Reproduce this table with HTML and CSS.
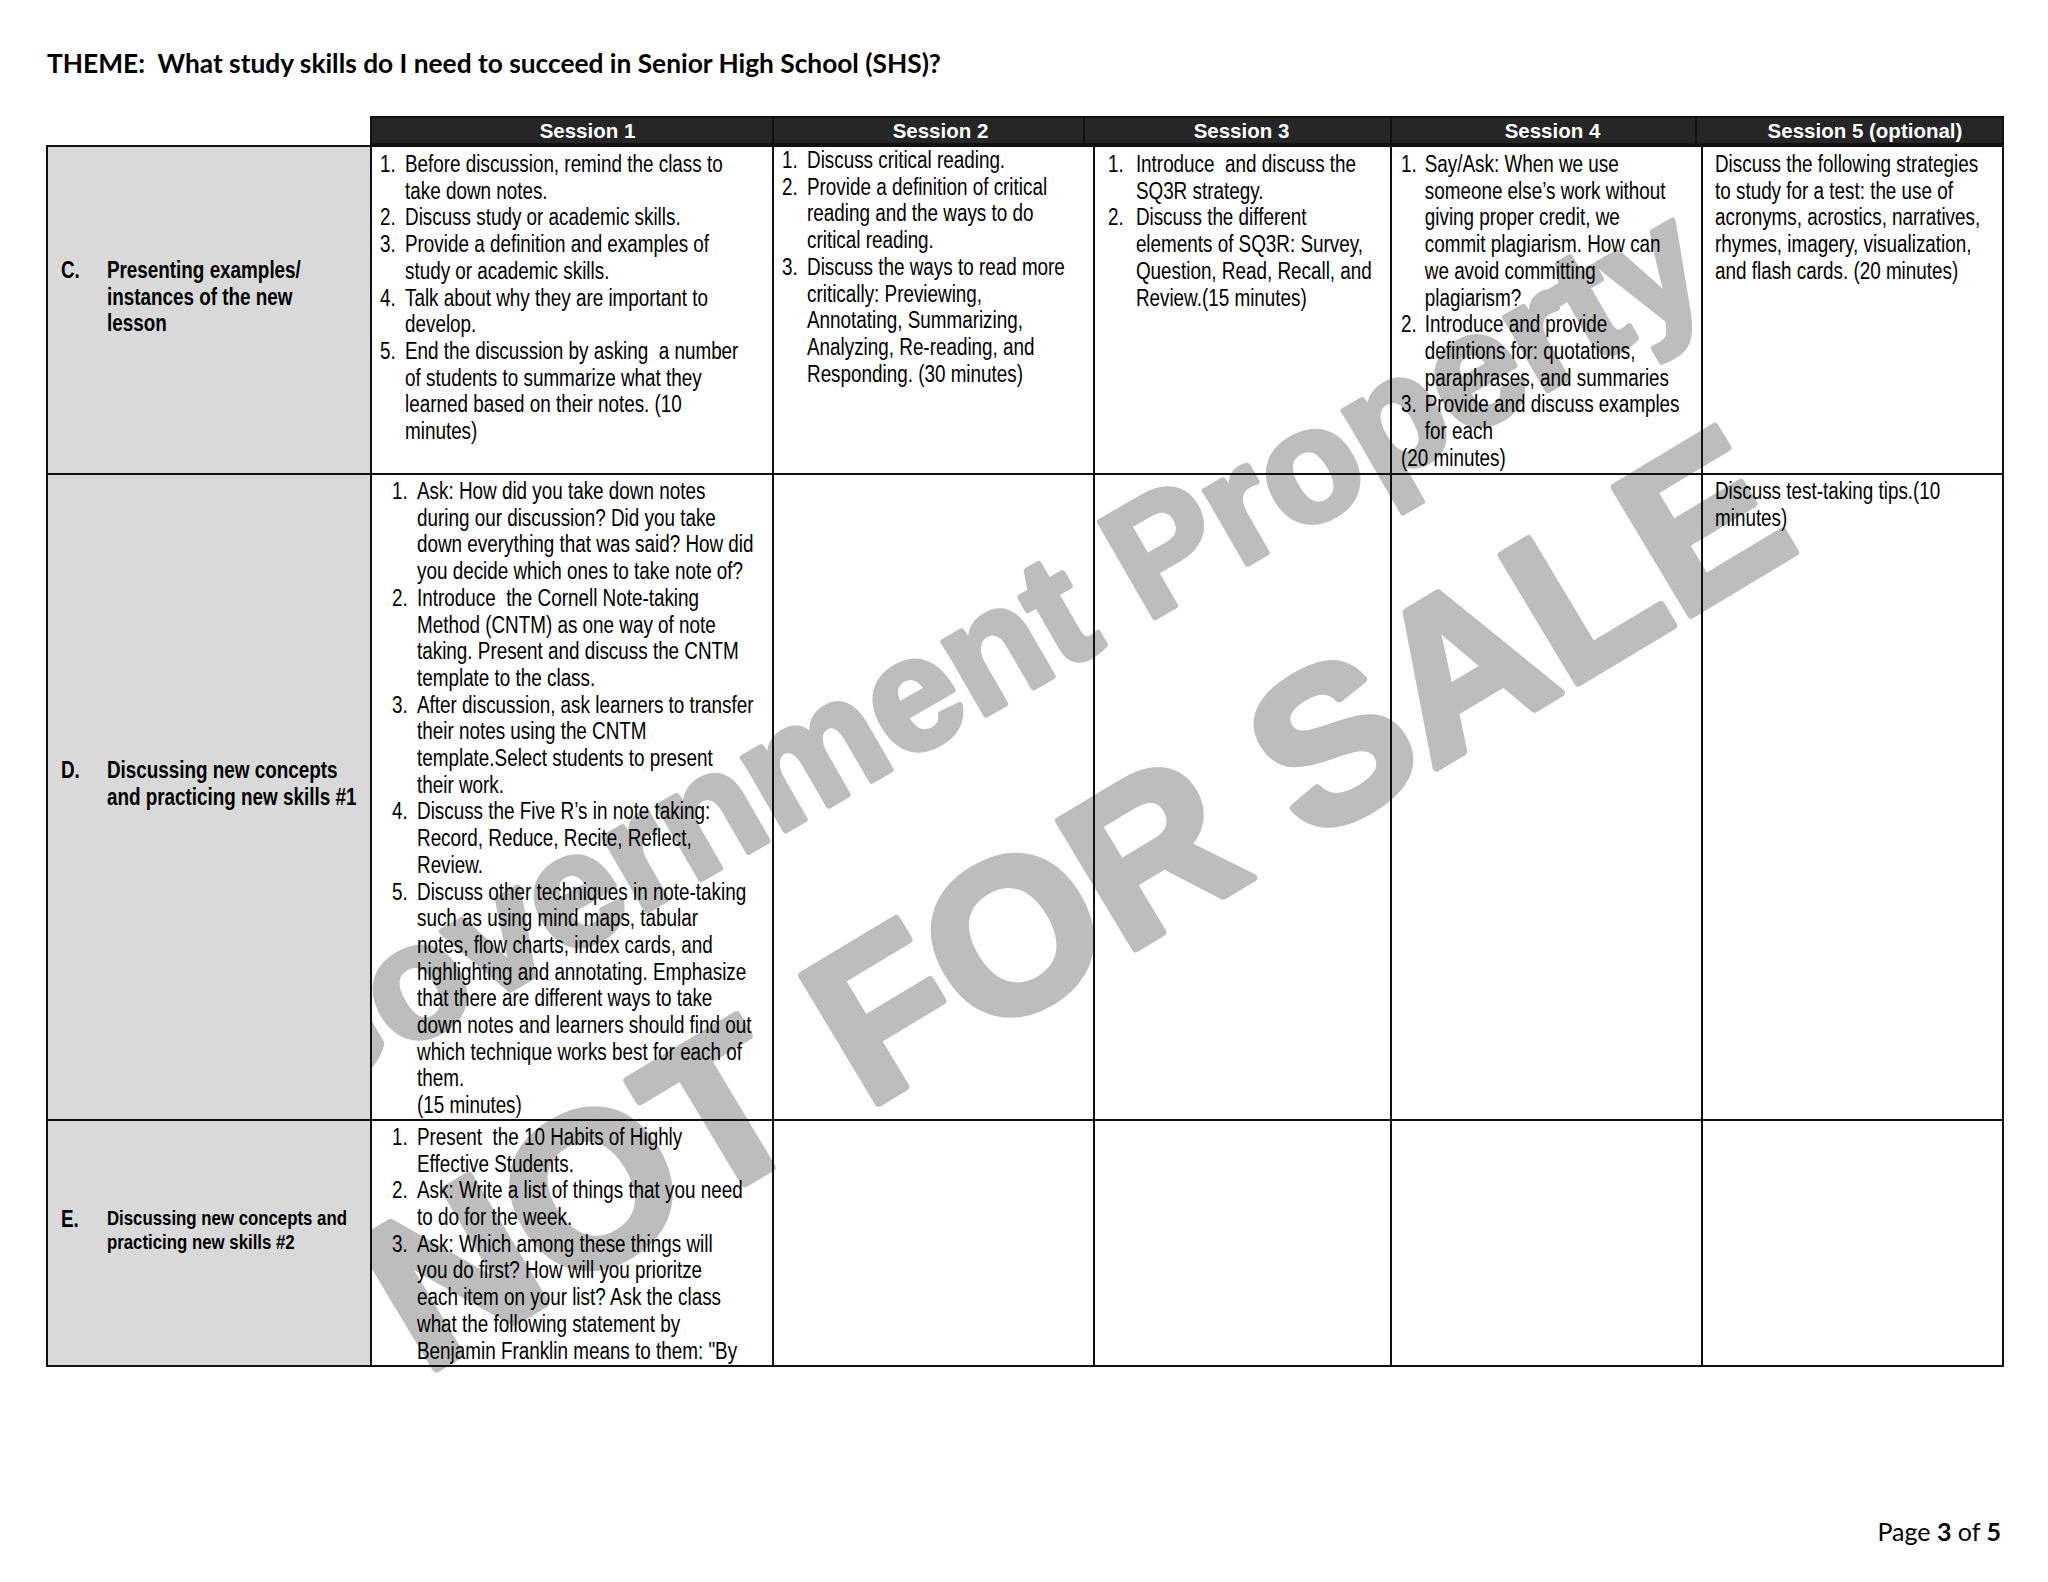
FILE: index.html
```html
<!DOCTYPE html>
<html lang="en">
<head>
<meta charset="utf-8">
<title>THEME: What study skills do I need to succeed in Senior High School (SHS)?</title>
<link rel="stylesheet" href="styles.css">
</head>
<body>
<div class="page">
  <svg class="watermark" width="2048" height="1582" viewBox="0 0 2048 1582" aria-hidden="true">
    <text class="wm wm-gov" x="291" y="1116" transform="rotate(-30 291 1116)">Government Property</text>
    <text class="wm wm-sale" x="424" y="1376" transform="rotate(-31 424 1376)">NOT FOR SALE</text>
  </svg>

  <h1 class="theme">THEME:&nbsp; What study skills do I need to succeed in Senior High School (SHS)?</h1>

  <div class="sheet">
    <table class="head">
      <colgroup>
        <col class="h1"><col class="h2"><col class="h3"><col class="h4"><col class="h5">
      </colgroup>
      <tr>
        <th class="hs1">Session 1</th>
        <th class="hs2">Session 2</th>
        <th class="hs3">Session 3</th>
        <th class="hs4">Session 4</th>
        <th class="hs5">Session 5 (optional)</th>
      </tr>
    </table>

    <table class="plan">
      <colgroup>
        <col class="c0"><col class="c1"><col class="c2"><col class="c3"><col class="c4"><col class="c5">
      </colgroup>
      <tr class="row-c">
        <td class="label">
          <div class="lbl"><span class="key">C.</span><span class="what">Presenting examples/<br>instances of the new<br>lesson</span></div>
        </td>
        <td class="s1">
          <ol class="steps">
            <li><span class="n">1.</span><span class="t">Before discussion, remind the class to<br>take down notes.</span></li>
            <li><span class="n">2.</span><span class="t">Discuss study or academic skills.</span></li>
            <li><span class="n">3.</span><span class="t">Provide a definition and examples of<br>study or academic skills.</span></li>
            <li><span class="n">4.</span><span class="t">Talk about why they are important to<br>develop.</span></li>
            <li><span class="n">5.</span><span class="t">End the discussion by asking&nbsp; a number<br>of students to summarize what they<br>learned based on their notes. (10<br>minutes)</span></li>
          </ol>
        </td>
        <td class="s2">
          <ol class="steps">
            <li><span class="n">1.</span><span class="t">Discuss critical reading.</span></li>
            <li><span class="n">2.</span><span class="t">Provide a definition of critical<br>reading and the ways to do<br>critical reading.</span></li>
            <li><span class="n">3.</span><span class="t">Discuss the ways to read more<br>critically: Previewing,<br>Annotating, Summarizing,<br>Analyzing, Re-reading, and<br>Responding. (30 minutes)</span></li>
          </ol>
        </td>
        <td class="s3">
          <ol class="steps">
            <li><span class="n">1.</span><span class="t">Introduce&nbsp; and discuss the<br>SQ3R strategy.</span></li>
            <li><span class="n">2.</span><span class="t">Discuss the different<br>elements of SQ3R: Survey,<br>Question, Read, Recall, and<br>Review.(15 minutes)</span></li>
          </ol>
        </td>
        <td class="s4">
          <ol class="steps">
            <li><span class="n">1.</span><span class="t">Say/Ask: When we use<br>someone else’s work without<br>giving proper credit, we<br>commit plagiarism. How can<br>we avoid committing<br>plagiarism?</span></li>
            <li><span class="n">2.</span><span class="t">Introduce and provide<br>defintions for: quotations,<br>paraphrases, and summaries</span></li>
            <li><span class="n">3.</span><span class="t">Provide and discuss examples<br>for each</span></li>
          </ol>
          <p class="note">(20 minutes)</p>
        </td>
        <td class="s5">
          <p class="plain">Discuss the following strategies<br>to study for a test: the use of<br>acronyms, acrostics, narratives,<br>rhymes, imagery, visualization,<br>and flash cards. (20 minutes)</p>
        </td>
      </tr>

      <tr class="row-d">
        <td class="label">
          <div class="lbl"><span class="key">D.</span><span class="what">Discussing new concepts<br>and practicing new skills #1</span></div>
        </td>
        <td class="s1 deep">
          <ol class="steps">
            <li><span class="n">1.</span><span class="t">Ask: How did you take down notes<br>during our discussion? Did you take<br>down everything that was said? How did<br>you decide which ones to take note of?</span></li>
            <li><span class="n">2.</span><span class="t">Introduce&nbsp; the Cornell Note-taking<br>Method (CNTM) as one way of note<br>taking. Present and discuss the CNTM<br>template to the class.</span></li>
            <li><span class="n">3.</span><span class="t">After discussion, ask learners to transfer<br>their notes using the CNTM<br>template.Select students to present<br>their work.</span></li>
            <li><span class="n">4.</span><span class="t">Discuss the Five R’s in note taking:<br>Record, Reduce, Recite, Reflect,<br>Review.</span></li>
            <li><span class="n">5.</span><span class="t">Discuss other techniques in note-taking<br>such as using mind maps, tabular<br>notes, flow charts, index cards, and<br>highlighting and annotating. Emphasize<br>that there are different ways to take<br>down notes and learners should find out<br>which technique works best for each of<br>them.<br>(15 minutes)</span></li>
          </ol>
        </td>
        <td class="s2"></td>
        <td class="s3"></td>
        <td class="s4"></td>
        <td class="s5">
          <p class="plain">Discuss test-taking tips.(10<br>minutes)</p>
        </td>
      </tr>

      <tr class="row-e">
        <td class="label">
          <div class="lbl"><span class="key">E.</span><span class="what small">Discussing new concepts and<br>practicing new skills #2</span></div>
        </td>
        <td class="s1 deep">
          <div class="clip">
            <ol class="steps">
              <li><span class="n">1.</span><span class="t">Present&nbsp; the 10 Habits of Highly<br>Effective Students.</span></li>
              <li><span class="n">2.</span><span class="t">Ask: Write a list of things that you need<br>to do for the week.</span></li>
              <li><span class="n">3.</span><span class="t">Ask: Which among these things will<br>you do first? How will you prioritze<br>each item on your list? Ask the class<br>what the following statement by<br>Benjamin Franklin means to them: "By</span></li>
            </ol>
          </div>
        </td>
        <td class="s2"></td>
        <td class="s3"></td>
        <td class="s4"></td>
        <td class="s5"></td>
      </tr>
    </table>
  </div>

  <footer class="page-num">Page <b>3</b> of <b>5</b></footer>
</div>
</body>
</html>
```

FILE: styles.css
```css
html, body {
  margin: 0;
  padding: 0;
  background: #ffffff;
}

.page {
  position: relative;
  width: 2048px;
  height: 1582px;
  box-sizing: border-box;
  padding: 48px 0 0 46px;
  color: #000;
}

/* watermark behind the table */
.watermark {
  position: absolute;
  left: 0;
  top: 0;
  z-index: 0;
}
.wm {
  font-family: "Liberation Sans", Arial, sans-serif;
  font-weight: 700;
  fill: #bdbdbd;
  stroke: #bdbdbd;
  stroke-linejoin: round;
}
.wm-gov {
  font-size: 160px;
  stroke-width: 6px;
}
.wm-sale {
  font-size: 216px;
  stroke-width: 8px;
}

.theme {
  margin: 0 0 38px 1px;
  font-family: Lato, "Open Sans", sans-serif;
  font-weight: 700;
  font-size: 26.3px;
  line-height: 30px;
  color: #000;
}

.sheet {
  position: relative;
  z-index: 1;
  width: 1956px;
}

/* header band */
.head {
  margin-left: 324px;
  width: 1632px;
  border-collapse: collapse;
  table-layout: fixed;
}
.head .h1 { width: 402px; }
.head .h2 { width: 311px; }
.head .h3 { width: 307px; }
.head .h4 { width: 305px; }
.head .h5 { width: 307px; }
.head tr { height: 27px; }
.head th {
  padding: 0;
  background: #262626;
  border: 2px solid #111;
  color: #fff;
  font-family: "Liberation Sans", Arial, sans-serif;
  font-weight: 700;
  font-size: 20.5px;
  line-height: 23px;
  text-align: center;
}
.head .hs1 { padding-left: 31px; }
.head .hs2 { padding-left: 24px; }
.head .hs3 { padding-left: 8px; }
.head .hs4 { padding-left: 18px; }
.head .hs5 { padding-left: 31px; }

/* body grid */
.plan {
  width: 1956px;
  border-collapse: collapse;
  table-layout: fixed;
  font-family: "Liberation Sans", Arial, sans-serif;
  font-size: 23px;
  line-height: 26.7px;
  color: #000;
}
.plan .c0 { width: 324px; }
.plan .c1 { width: 402px; }
.plan .c2 { width: 321px; }
.plan .c3 { width: 297px; }
.plan .c4 { width: 311px; }
.plan .c5 { width: 301px; }

.row-c { height: 328px; }
.row-d { height: 645px; }
.row-e { height: 246px; }

.plan td {
  border: 2px solid #111;
  padding: 0;
  vertical-align: top;
  background: transparent;
}

/* condensed face (Arial Narrow proportions) */
.steps, .plain, .note, .lbl {
  transform: scaleX(0.82);
  transform-origin: 0 0;
}

.plan td.label {
  background: #d9d9d9;
  vertical-align: middle;
  padding: 0 0 0 13px;
}
.lbl {
  display: flex;
  font-weight: 700;
  margin-bottom: 26px;
  white-space: nowrap;
}
.key {
  flex: 0 0 56px;
}
.what.small {
  font-size: 20.5px;
  line-height: 23.5px;
}

.steps {
  list-style: none;
  margin: 0;
  padding: 0;
}
.steps li {
  display: flex;
  white-space: nowrap;
}
.steps .n {
  flex: 0 0 30.5px;
}

.row-c .s1 { padding: 4px 0 0 8px; }
.row-c .s2 { padding: 0 0 0 8px; }
.row-c .s3 { padding: 4px 0 0 13px; }
.row-c .s3 .n { flex-basis: 34px; }
.row-c .s4 { padding: 4px 0 0 9px; }
.row-c .s4 .n { flex-basis: 29px; }
.row-c .s5 { padding: 4px 0 0 12px; }

.s1.deep { padding: 3px 0 0 20px; }
.row-d .s5 { padding: 3px 0 0 12px; }

.note, .plain {
  margin: 0;
  white-space: nowrap;
}

.clip {
  height: 241px;
  overflow: hidden;
}

.page-num {
  position: relative;
  z-index: 1;
  width: 1955px;
  margin-top: 149px;
  text-align: right;
  font-family: Lato, "Open Sans", sans-serif;
  font-size: 25px;
  line-height: 30px;
}
.page-num b {
  font-weight: 700;
}
```
